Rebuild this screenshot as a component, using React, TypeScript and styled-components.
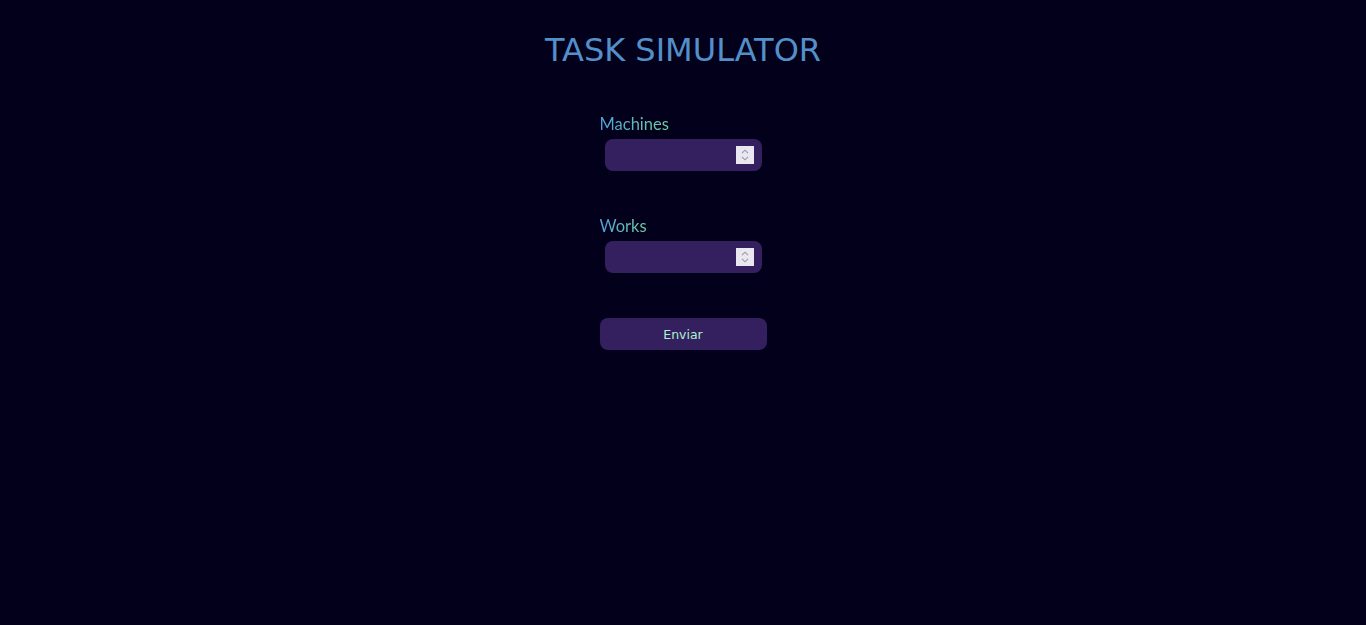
import React from "react";
import styled, { createGlobalStyle } from "styled-components";

// ||||||||||||||||||||||||||||| Global ||||||||||||||||||||||||||||||||||||

const GlobalStyle = createGlobalStyle`
  html, body {
    margin: 0;
    padding: 0;
    background: #03001c;
    min-height: 100%;
  }
  body {
    font-family: "Lato", "Noto Sans", sans-serif;
  }
`;

// ||||||||||||||||||||||||||||| Styled ||||||||||||||||||||||||||||||||||||

const Page = styled.main`
  min-height: 625px;
  display: flex;
  flex-direction: column;
  align-items: center;
  background: #03001c;
`;

const Title = styled.h1`
  margin: 30px 0 0;
  font-family: "DejaVu Sans", Verdana, sans-serif;
  font-weight: normal;
  font-size: 32px;
  line-height: 40px;
  color: #5390c9;
`;

const Form = styled.form`
  margin-top: 44px;
  width: 167px;
  display: flex;
  flex-direction: column;
`;

const Field = styled.div`
  display: flex;
  flex-direction: column;
  margin-bottom: 45px;
`;

const Label = styled.label`
  font-size: 16.5px;
  line-height: 20px;
  align-self: flex-start;
  background: linear-gradient(90deg, #4fa0d6, #6fd3a0);
  -webkit-background-clip: text;
  background-clip: text;
  color: transparent;
`;

const InputWrap = styled.div`
  position: relative;
  margin: 5px 0 0 5px;
  width: 157px;
  height: 32px;
`;

const Input = styled.input`
  width: 100%;
  height: 100%;
  box-sizing: border-box;
  border: none;
  border-radius: 8px;
  background: #35205f;
  color: #cfe9f0;
  padding: 0 30px 0 10px;
  font-size: 14px;
  outline: none;
  -moz-appearance: textfield;

  &::-webkit-outer-spin-button,
  &::-webkit-inner-spin-button {
    -webkit-appearance: none;
    margin: 0;
  }
`;

const Spinner = styled.span`
  position: absolute;
  top: 7px;
  right: 8px;
  width: 18px;
  height: 18px;
  background: #e9e7ef;
  display: flex;
  flex-direction: column;
  align-items: center;
  justify-content: center;
  gap: 2px;
  pointer-events: none;
`;

const Button = styled.button`
  width: 167px;
  height: 32px;
  border: none;
  border-radius: 8px;
  background: #35205f;
  color: #a9f2cf;
  font-family: "DejaVu Sans", Verdana, sans-serif;
  font-size: 12.5px;
  cursor: pointer;
`;

// ||||||||||||||||||||||||||||| Parts ||||||||||||||||||||||||||||||||||||

const Chevron: React.FC<{ up?: boolean }> = ({ up }) => (
  <svg width="8" height="5" viewBox="0 0 8 5">
    <path
      d={up ? "M1 4.2 L4 1.2 L7 4.2" : "M1 0.8 L4 3.8 L7 0.8"}
      fill="none"
      stroke="#9a98a4"
      strokeWidth="1.1"
    />
  </svg>
);

const NumberField: React.FC<{ id: string; label: string }> = ({ id, label }) => (
  <Field>
    <Label htmlFor={id}>{label}</Label>
    <InputWrap>
      <Input id={id} type="number" />
      <Spinner>
        <Chevron up />
        <Chevron />
      </Spinner>
    </InputWrap>
  </Field>
);

// ||||||||||||||||||||||||||||| App ||||||||||||||||||||||||||||||||||||

const App: React.FC = () => {
  return (
    <>
      <GlobalStyle />
      <Page>
        <Title>TASK SIMULATOR</Title>
        <Form onSubmit={(e) => e.preventDefault()}>
          <NumberField id="machines" label="Machines" />
          <NumberField id="works" label="Works" />
          <Button type="submit">Enviar</Button>
        </Form>
      </Page>
    </>
  );
};

export default App;
